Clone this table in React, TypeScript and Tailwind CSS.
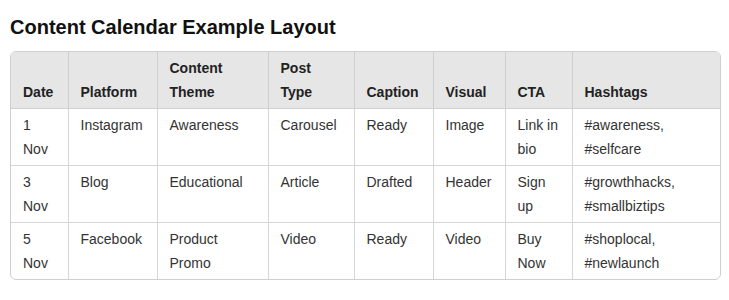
const columns = [
  { label: 'Date', width: 'w-[57px]' },
  { label: 'Platform', width: 'w-[89px]' },
  { label: 'Content Theme', width: 'w-[111px]' },
  { label: 'Post Type', width: 'w-[86px]' },
  { label: 'Caption', width: 'w-[79px]' },
  { label: 'Visual', width: 'w-[72px]' },
  { label: 'CTA', width: 'w-[67px]' },
  { label: 'Hashtags', width: 'w-[148px]' },
]

const rows = [
  ['1 Nov', 'Instagram', 'Awareness', 'Carousel', 'Ready', 'Image', 'Link in bio', '#awareness, #selfcare'],
  ['3 Nov', 'Blog', 'Educational', 'Article', 'Drafted', 'Header', 'Sign up', '#growthhacks, #smallbiztips'],
  ['5 Nov', 'Facebook', 'Product Promo', 'Video', 'Ready', 'Video', 'Buy Now', '#shoplocal, #newlaunch'],
]

export default function App() {
  return (
    <div className="min-h-[300px] bg-white px-[10px] pt-[15px] font-['Liberation_Sans',Arial,sans-serif] text-[#333]">
      <h2 className="text-[20px] font-bold leading-6 text-[#111]">Content Calendar Example Layout</h2>

      <div className="mt-[12px] w-[711px] overflow-hidden rounded-md border border-[#cfcfcf]">
        <table className="w-full table-fixed border-collapse text-[14px] leading-6">
          <colgroup>
            {columns.map((col) => (
              <col key={col.label} className={col.width} />
            ))}
          </colgroup>
          <thead>
            <tr className="bg-[#e6e6e6]">
              {columns.map((col, i) => (
                <th
                  key={col.label}
                  className={`border-b border-[#cfcfcf] px-3 py-1 text-left align-bottom font-bold text-[#222] ${
                    i > 0 ? 'border-l' : ''
                  }`}
                >
                  {col.label}
                </th>
              ))}
            </tr>
          </thead>
          <tbody>
            {rows.map((row, r) => (
              <tr key={r}>
                {row.map((cell, i) => (
                  <td
                    key={i}
                    className={`border-[#d6d6d6] px-3 py-1 align-top ${i > 0 ? 'border-l' : ''} ${
                      r < rows.length - 1 ? 'border-b' : ''
                    }`}
                  >
                    {cell}
                  </td>
                ))}
              </tr>
            ))}
          </tbody>
        </table>
      </div>
    </div>
  )
}
